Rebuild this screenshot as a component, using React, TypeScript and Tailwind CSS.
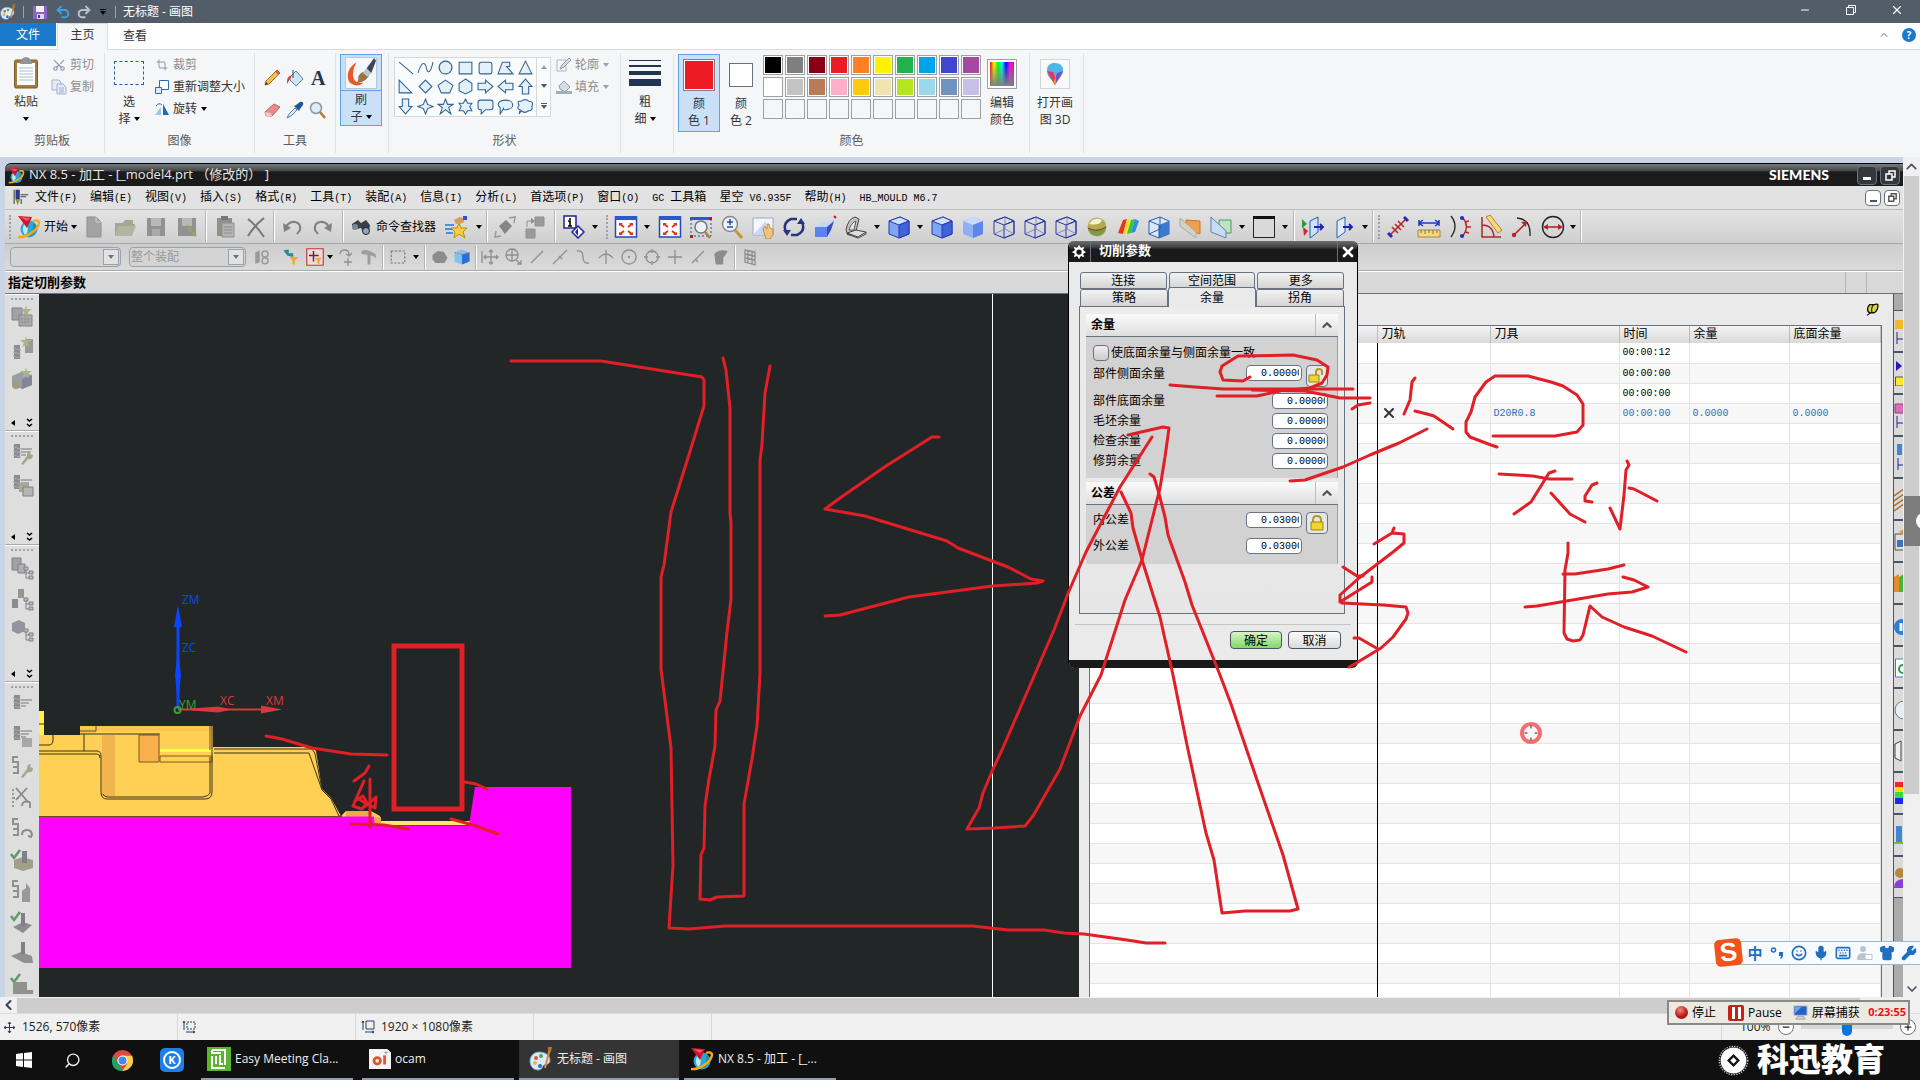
import { Fragment, useState } from "react";
import type { ReactNode } from "react";
import { ChevronUp, ChevronDown, ChevronLeft, Scissors, Crop, Search, Undo2, Redo2, Smile, Mic, Keyboard, Shirt, Wrench, X, Minus, Plus } from "lucide-react";

const UI = "font-['Open_Sans','Noto_Sans_CJK_SC',sans-serif]";
const NX = "font-['Liberation_Sans','Noto_Sans_CJK_SC',sans-serif]";
const MONO = "font-['Liberation_Mono','Noto_Sans_CJK_SC',monospace]";

/* ---------- small helpers ---------- */

// latin runs are half the width of a CJK glyph in the NX menus
function Sim({ children }: { children: string }) {
  const parts = children.split(/([\u4e00-\u9fff]+)/).filter(Boolean);
  return (
    <span className="whitespace-pre">
      {parts.map((p, i) => (/[\u4e00-\u9fff]/.test(p) ? <Fragment key={i}>{p}</Fragment> : <span key={i} className={`${MONO} text-[10px]`}>{p}</span>))}
    </span>
  );
}

function Ico({ children, className = "size-6", box = "0 0 24 24" }: { children: ReactNode; className?: string; box?: string }) {
  return <svg viewBox={box} className={`shrink-0 ${className}`} fill="none">{children}</svg>;
}

function Caret({ className = "text-black" }: { className?: string }) {
  return <svg viewBox="0 0 6 4" className={`w-[6px] h-[4px] shrink-0 ${className}`}><path d="M0 0h6L3 4z" fill="currentColor" /></svg>;
}

function NxLogo({ className = "size-6" }: { className?: string }) {
  return (
    <Ico className={className}>
      <circle cx="12" cy="14" r="8.500" fill="#2aa5dd" />
      <path d="M8 20c-3-4-3-9 1-13 2 5 3 10-1 13z" fill="#bfeaf8" />
      <path d="M12 22c3-3 5-8 4-14 4 2 6 9-4 14z" fill="#1f7d3c" opacity=".6" />
      <path d="M1 22c7 1 20-6 21-14 0-3-4-3-6-2" stroke="#f2a91c" strokeWidth="2.400" />
      <path d="M1 1l14 1-5 11z" fill="#d3142b" />
      <path d="M3 2l10 1-3 3z" fill="#f05a6a" />
    </Ico>
  );
}

function Palette({ className = "size-6" }: { className?: string }) {
  return (
    <Ico className={className}>
      <path d="M10 5c6 0 11 3 11 8s-4 4-6 5-1 5-6 5-8-4-8-9 4-9 9-9z" fill="#d9ecf7" stroke="#6ba3c7" />
      <circle cx="7" cy="11" r="2" fill="#e2533f" /><circle cx="12" cy="9" r="2" fill="#4aa94a" />
      <circle cx="6" cy="16" r="2" fill="#f0b429" /><circle cx="11" cy="19" r="2" fill="#3567c9" />
      <path d="M20 1l2 1-5 19-2 0z" fill="#e08a35" /><path d="M19 0h4l-1 5-3-1z" fill="#b3752f" />
    </Ico>
  );
}

/* ---------- Paint ---------- */

function TitleBar() {
  return (
    <header className="h-[23px] shrink-0 bg-[#535d6a] flex items-center text-white text-xs">
      <Palette className="size-4" />
      <span className="w-px h-3 bg-gray-400 ml-[7px]" />
      <Ico className="size-4 ml-2" box="0 0 16 16">
        <path d="M1 2h14v13H1z" fill="#8a63c4" /><path d="M4 2h8v6H4z" fill="#f4eefb" /><path d="M5 10h7v5H5z" fill="#dcd3ec" /><path d="M6 11h2v3H6z" fill="#57369b" />
      </Ico>
      <Undo2 className="size-4 ml-[7px] text-[#3ba0e6]" strokeWidth={3} />
      <Redo2 className="size-4 ml-[5px] text-[#b9c1ca]" strokeWidth={3} />
      <span className="ml-[8px] flex flex-col items-center gap-px"><i className="w-[6px] h-px bg-black" /><Caret /></span>
      <span className="w-px h-3 bg-gray-400 ml-[9px] mr-[7px]" />
      <h1>无标题 - 画图</h1>
      <div className="ml-auto flex items-center pb-1">
        <button aria-label="最小化" className="w-[46px] flex justify-center"><Minus className="size-3" strokeWidth={2} /></button>
        <button aria-label="还原" className="w-[46px] flex justify-center">
          <Ico className="size-[10px]" box="0 0 10 10"><path d="M.5 2.500h7v7h-7zM2.500 2.500v-2h7v7h-2" stroke="#fff" /></Ico>
        </button>
        <button aria-label="关闭" className="w-[46px] flex justify-center"><X className="size-[14px]" strokeWidth={2} /></button>
      </div>
    </header>
  );
}

function Tabs() {
  return (
    <nav className="h-[27px] shrink-0 bg-white border-b border-[#dadbdc] flex items-start text-xs text-[#333]">
      <button className="w-14 h-[23px] bg-[#1979ca] text-white">文件</button>
      <button className="w-[51px] h-[27px] ml-px bg-[#f5f6f7] border-x border-t border-[#dadbdc] pb-1">主页</button>
      <button className="w-[54px] h-[25px]">查看</button>
      <div className="ml-auto flex items-center gap-3 pt-[5px] pr-1">
        <ChevronUp className="size-3 text-gray-500" />
        <button aria-label="帮助" className="size-[14px] rounded-full bg-[#1979ca] text-white text-[10px] leading-[14px] font-bold">?</button>
      </div>
    </nav>
  );
}

function Group({ label, className, children }: { label?: string; className: string; children: ReactNode }) {
  return (
    <section className={`relative shrink-0 flex flex-col border-r border-[#dfe1e4] mt-[3px] mb-[4px] ${className}`}>
      <div className="flex-1 flex items-start">{children}</div>
      <div className="h-5 shrink-0 text-center leading-4 text-[#5c5c5c]">{label}</div>
    </section>
  );
}

const SHAPES = [
  "M2 3l13 11", "M1 13C5 0 8 4 9 9s4 4 6-6", "M8 2a6 6 0 1 0 .1 0z", "M2 3h12v11H2z", "M4 3h8q2 0 2 2v7q0 2-2 2H4q-2 0-2-2V5q0-2 2-2z", "M5 3h7v4H9l6 7H1z", "M8 2l6 12H2z",
  "M2 2l12 12H2z", "M8 2l6 6-6 6-6-6z", "M8 2l7 5-3 7H4L1 7z", "M8 1l6 4v7l-6 3-6-3V5z", "M1 5h7V2l7 6-7 6v-3H1z", "M15 5H8V2L1 8l7 6v-3h7z", "M5 15V8H2l6-7 6 7h-3v7z",
  "M5 1v7H2l6 7 6-7h-3V1z", "M8 1l2 5 5 2-5 2-2 5-2-5-5-2 5-2z", "M8 1l2 5h5l-4 3 2 6-5-4-5 4 2-6-4-3h5z", "M8 1l2 4h4l-2 3 2 4h-4l-2 3-2-3H2l2-4-2-3h4z", "M3 2h10q2 0 2 2v5q0 2-2 2H8l-4 4v-4H3q-2 0-2-2V4q0-2 2-2z", "M8 2c9 0 9 9 0 9-1 0-2 0-2-1l-3 5v-6C-1 6 2 2 8 2z", "M4 3q4-3 7 0q5 0 3 5q1 4-3 4q-4 3-7 0l-2 3 1-4q-4-1-1-4q-2-4 0-4z",
];

function ShapeGallery() {
  return (
    <div className="ml-[5px] mt-1 w-[157px] h-[60px] border border-[#d5d7da] bg-[#fafbfb] flex">
      <div className="grid grid-cols-7 w-[141px]">
        {SHAPES.map((d, i) => (
          <button key={i} aria-label={`形状 ${i + 1}`} className="flex items-center justify-center">
            <Ico className="size-[17px]" box="0 0 16 16"><path d={d} stroke="#2f6497" fill={i < 2 ? "none" : "#e3f1fb"} /></Ico>
          </button>
        ))}
      </div>
      <div className="flex-1 border-l border-[#d5d7da] flex flex-col items-center justify-around">
        <Caret className="rotate-180 text-gray-400" /><Caret className="text-gray-600" />
        <span className="flex flex-col items-center gap-px"><i className="w-[6px] h-px bg-gray-600" /><Caret className="text-gray-600" /></span>
      </div>
    </div>
  );
}

const ROW1 = ["bg-black", "bg-[#7f7f7f]", "bg-[#880015]", "bg-[#ed1c24]", "bg-[#ff7f27]", "bg-[#fff200]", "bg-[#22b14c]", "bg-[#00a2e8]", "bg-[#3f48cc]", "bg-[#a349a4]"];
const ROW2 = ["bg-white", "bg-[#c3c3c3]", "bg-[#b97a57]", "bg-[#ffaec9]", "bg-[#ffc90e]", "bg-[#efe4b0]", "bg-[#b5e61d]", "bg-[#99d9ea]", "bg-[#7092be]", "bg-[#c8bfe7]"];

function Swatches() {
  return (
    <div className="ml-px mt-[2px] shrink-0 grid grid-cols-10 gap-[2px]">
      {[...ROW1, ...ROW2].map((c) => (
        <button key={c} aria-label="颜色" className="size-5 border border-[#a0a0a0] bg-white p-px"><span className={`block size-full ${c}`} /></button>
      ))}
      {ROW1.map((c) => <span key={c} className="size-5 border border-[#a0a0a0]" />)}
    </div>
  );
}

function Stack({ icon, a, b, caret, className }: { icon: ReactNode; a: string; b?: string; caret?: boolean; className: string }) {
  return (
    <button className={`shrink-0 flex flex-col items-center text-xs leading-[17px] ${className}`}>
      <span className="h-10 flex items-center justify-center shrink-0">{icon}</span>
      <span>{a}</span>
      <span className="flex items-center gap-[3px] h-[17px]">{b}{caret && <Caret />}</span>
    </button>
  );
}

function Small({ icon, text, caret, off }: { icon: ReactNode; text: string; caret?: boolean; off?: boolean }) {
  return (
    <button className={`h-[22px] flex items-center gap-1 whitespace-nowrap ${off ? "text-[#8d8d8d]" : ""}`}>
      <span className="w-[14px] flex justify-center">{icon}</span>{text}{caret && <Caret className={off ? "text-gray-400" : "text-black"} />}
    </button>
  );
}

function Ribbon() {
  return (
    <div className="h-[107px] shrink-0 bg-[#f5f6f7] flex text-xs text-[#333]">
      <Group label="剪贴板" className="w-[105px]">
        <Stack className="w-[52px]" a="粘贴" caret icon={
          <Ico className="w-6 h-8" box="0 0 24 32">
            <rect x=".5" y="3" width="23" height="28" rx="1.500" fill="#a67c3e" stroke="#7d5b28" /><path d="M3 6h18v22H3z" fill="#fff" />
            <path d="M5 11h14M5 14h14M5 17h14M5 20h14M5 23h14" stroke="#a9bdd6" /><path d="M7 3q2-3 5-3t5 3l1 4H6z" fill="#8d949b" />
          </Ico>} />
        <div className="pt-[1px]">
          <Small off text="剪切" icon={<Scissors className="size-[14px] -rotate-90 text-[#8a98b0]" />} />
          <Small off text="复制" icon={<Ico className="size-4" box="0 0 16 16"><path d="M1 1h7l2 2v8H1z" fill="#e6ecf5" stroke="#9fb0c9" /><path d="M6 5h6l3 3v7H6z" fill="#e6ecf5" stroke="#9fb0c9" /><path d="M8 9h5M8 11h5M8 13h5" stroke="#9fb0c9" /></Ico>} />
        </div>
      </Group>
      <Group label="图像" className="w-[150px]">
        <Stack className="w-12" a="选" b="择" caret icon={<span className="w-[30px] h-6 border border-dashed border-[#2b5f9e]" />} />
        <div className="pt-[1px] ml-[2px]">
          <Small off text="裁剪" icon={<Crop className="size-3 text-[#8a98b0]" />} />
          <Small text="重新调整大小" icon={<Ico className="size-[14px]" box="0 0 14 14"><path d="M4.500 .5h9v9h-9z" stroke="#2b6cb0" fill="#fff" /><path d="M.5 7.500h6v6h-6z" stroke="#2b6cb0" fill="#d9ecfb" /></Ico>} />
          <Small text="旋转" caret icon={<Ico className="size-[14px]" box="0 0 14 14"><path d="M0 13h6V5z" fill="#9fc4e6" /><path d="M8 13h6L8 2z" fill="#1f6bb5" /><path d="M1 4q3-4 6-1" stroke="#1f6bb5" /></Ico>} />
        </div>
      </Group>
      <Group label="工具" className="w-[81px]">
        <div className="grid grid-cols-3 w-[70px] ml-[5px] mt-2 h-16 place-items-center">
          <Ico className="size-[18px]" box="0 0 18 18"><path d="M2 16l1-4L14 1l3 3L6 15z" fill="#f4c04b" stroke="#a36a2b" /><path d="M2 16l1-3 2 2z" fill="#333" /><path d="M13 2l3 3" stroke="#c55" strokeWidth="2" /></Ico>
          <Ico className="size-[18px]" box="0 0 18 18"><path d="M4 8l6-6 7 8-7 7-6-6z" fill="#cfe3f3" stroke="#4c81ae" /><path d="M7 1v8" stroke="#345" /><path d="M6 6q-6 1-5 9l3-5z" fill="#d8432c" /></Ico>
          <span className="font-['Liberation_Serif',serif] font-bold text-[20px] leading-5 text-[#1f3552]">A</span>
          <Ico className="size-[18px]" box="0 0 18 18"><path d="M2 11l9-8 6 3-8 9-6 0z" fill="#ea8b8b" stroke="#c06060" /><path d="M2 11l6 1 1 3-6 1z" fill="#f6c3c3" /></Ico>
          <Ico className="size-[18px]" box="0 0 18 18"><path d="M1 17l2-4 6-6 2 2-6 6z" fill="#dcebf6" stroke="#5681a8" /><path d="M8 5l5 5 1-2 3-4q1-4-3-3l-4 3z" fill="#20568f" /></Ico>
          <Ico className="size-[18px]" box="0 0 18 18"><circle cx="7" cy="7" r="5.500" fill="#dcecf8" stroke="#8798a8" strokeWidth="1.500" /><path d="M11 11l5 6" stroke="#b0793a" strokeWidth="2.500" /></Ico>
        </div>
      </Group>
      <Group className="w-[53px]">
        <button className="ml-1 mt-[1px] w-[42px] h-[72px] border border-[#62a2e4] bg-[#c9e0f7] flex flex-col items-center leading-[17px]">
          <span className="h-9 w-full border-b border-[#62a2e4] flex items-center justify-center">
            <Ico className="size-8 bg-[#f4f7fa] border border-[#b9c6d3]" box="0 0 32 32">
              <path d="M11 5C2 9-1 22 5 27q7 5 14-1-9 2-11-5Q6 13 11 5z" fill="#e8582a" /><path d="M13 20q4-8 12-4-1 9-14 11 3-3 2-7z" fill="#9a7440" /><path d="M18 16l4-5 5 5-4 4z" fill="#b9c4cf" /><path d="M22 11L30 0l2 3-5 13z" fill="#3a4756" />
            </Ico>
          </span>
          <span>刷</span>
          <span className="flex items-center gap-[3px]">子<Caret /></span>
        </button>
      </Group>
      <Group label="形状" className="w-[232px]">
        <ShapeGallery />
        <div className="pt-[1px] ml-[6px]">
          <Small off text="轮廓" caret icon={<Ico className="size-4" box="0 0 16 16"><path d="M1 3h9v11H1z" stroke="#a9b4c2" /><path d="M4 12l2-4 7-7 2 2-7 7z" fill="#d8dde3" stroke="#8f9cab" /></Ico>} />
          <Small off text="填充" caret icon={<Ico className="size-4" box="0 0 16 16"><path d="M0 12h16v3H0z" fill="#a3afbf" /><path d="M3 7l5-5 6 6-5 5-5-3z" fill="#d5dce5" stroke="#8f9cab" /></Ico>} />
        </div>
      </Group>
      <Group className="w-[53px]">
        <Stack className="w-12" a="粗" b="细" caret icon={
          <span className="w-8 flex flex-col gap-1 *:bg-[#1f3552]"><i className="h-px" /><i className="h-[2px]" /><i className="h-1" /><i className="h-[7px]" /></span>} />
      </Group>
      <Group label="颜色" className="w-[356px]">
        <Stack className="w-[42px] h-[78px] ml-1 mt-px border border-[#62a2e4] bg-[#c9e0f7]" a="颜" b="色 1" icon={<span className="size-8 border border-[#8c7b7b] bg-white p-px"><i className="block size-full bg-[#ed1c24]" /></span>} />
        <Stack className="w-[42px] mt-[2px]" a="颜" b="色 2" icon={<span className="size-6 border border-gray-500 bg-white" />} />
        <Swatches />
        <Stack className="w-[42px] mt-px" a="编辑" b="颜色" icon={
          <span className="size-[30px] border border-gray-400 bg-white p-[2px]"><i className="block size-full bg-[linear-gradient(to_top,#808080,transparent),linear-gradient(to_right,#f00,#ff0,#0f0,#0ff,#00f,#f0f,#f06)]" /></span>} />
      </Group>
      <Group className="w-[54px]">
        <Stack className="w-[50px] mt-px" a="打开画" b="图 3D" icon={
          <span className="size-[30px] border border-gray-300 bg-[#fafafa] flex items-center justify-center">
            <Ico className="size-6">
              <path d="M12 1c6 0 9 4 8 9s-6 7-8 13C10 17 4 16 4 9s4-8 8-8z" fill="#4cb6ea" /><path d="M4 9q3 6 8 14 1-9-2-13z" fill="#e8365e" /><path d="M20 9q-3 7-8 14 0-7 2-12z" fill="#7b4fc9" /><path d="M12 23q-2-4 0-7 2 3 0 7z" fill="#f39a2b" />
            </Ico>
          </span>} />
      </Group>
    </div>
  );
}

/* ---------- NX icons ---------- */

const G = "#8f8f8f";

function Cube({ kind = "solid" }: { kind?: "solid" | "wire" | "soft" }) {
  if (kind === "soft") return <Ico><path d="M2 6l11-4 9 4v13l-10 4-10-4z" fill="#8fb0f5" /><path d="M2 6l10 4 10-4-9-4z" fill="#c9d9fb" /><path d="M12 10v13l10-4V6z" fill="#5f86e8" /></Ico>;
  const wire = kind === "wire";
  return (
    <Ico>
      <path d="M2 6l11-4 9 4v13l-10 4-10-4z" fill={wire ? "none" : "#7ea4f4"} stroke="#2b3aa8" />
      <path d="M2 6l10 4 10-4-9-4z" fill={wire ? "none" : "#cfe0fd"} stroke="#2b3aa8" />
      <path d="M12 10v13l10-4V6z" fill={wire ? "none" : "#3e64dc"} stroke="#2b3aa8" />
      {wire && <path d="M13 2v12L2 19M13 14l9 5" stroke="#6a74c8" strokeWidth=".8" />}
    </Ico>
  );
}

const FIT = (
  <Ico>
    <path d="M1.500 2h21v20h-21z" fill="#fff" stroke="#2448b5" strokeWidth="1.500" /><path d="M1 1h22v4H1z" fill="#2f57c9" />
    <path d="M6 9l4 3M18 9l-4 3M6 19l4-3M18 19l-4-3" stroke="#d8331f" strokeWidth="2" /><path d="M5 8h4l-4 3zM19 8h-4l4 3zM5 20h4l-4-3zM19 20h-4l4-3z" fill="#d8331f" />
  </Ico>
);

type Item = [kind: "icon" | "caret" | "sep" | "grip" | "text", width: string, content?: ReactNode];

const TOOLBAR: Item[] = [
  ["grip", "w-[10px]"], ["icon", "w-[27px]", <NxLogo />], ["text", "w-[28px]", "开始"], ["caret", "w-2"],
  ["icon", "w-8", <Ico><path d="M5 2h9l5 5v15H5z" fill="#a3a3a3" stroke={G} /><path d="M14 2v5h5" stroke="#ccc" /></Ico>],
  ["icon", "w-[30px]", <Ico><path d="M2 8h8l2-3h8v4l2 0-3 12H2z" fill="#a5a593" /><path d="M5 11h18l-4 10H2z" fill="#b4b4a2" /></Ico>],
  ["icon", "w-8", <Ico><path d="M3 3h18v18H3z" fill="#929292" /><path d="M7 3h10v8H7z" fill="#b9b9b9" /><path d="M8 14h8v7H8z" fill="#aaa" /></Ico>],
  ["icon", "w-[30px]", <Ico><path d="M3 3h18v18H3z" fill="#929292" /><path d="M7 3h10v8H7z" fill="#b9b9b9" /><path d="M10 11l3-1 9 10-2 2z" fill="#a39a6a" /></Ico>],
  ["sep", "w-2"],
  ["icon", "w-[30px]", <Ico><path d="M4 3h15v18H4z" fill="#909087" /><path d="M8 1h7v4H8z" fill="#777" /><path d="M9 8h12v14H9z" fill="#b3b3b3" stroke={G} /><path d="M11 12h8M11 15h8M11 18h8" stroke={G} /></Ico>],
  ["icon", "w-[31px]", <Ico><path d="M4 4q8 6 16 18M20 3Q10 11 4 21" stroke="#777" strokeWidth="2" /></Ico>],
  ["sep", "w-[6px]"],
  ["icon", "w-[30px]", <Ico><path d="M5 13Q9 6 15 7t5 8l-3 4" stroke="#808080" strokeWidth="2" /><path d="M3 8l1 9 7-4z" fill="#808080" /></Ico>],
  ["icon", "w-8", <Ico><path d="M19 13Q15 6 9 7t-5 8l3 4" stroke="#808080" strokeWidth="2" /><path d="M21 8l-1 9-7-4z" fill="#808080" /></Ico>],
  ["sep", "w-2"],
  ["icon", "w-7", <Ico><path d="M3 9l6-4 3 3 5-3 4 5-1 7q-3 4-6 0l-2-4-4 1q-4 2-5-2z" fill="#3b3f47" /><circle cx="6" cy="12" r="3" fill="#7d8a9c" /><circle cx="17" cy="16" r="3.500" fill="#92a5c4" stroke="#222" /></Ico>],
  ["text", "w-[62px]", "命令查找器"],
  ["icon", "w-[38px]", <Ico><path d="M1 10h9M1 14h8M2 18h7" stroke="#4a90d8" strokeWidth="2" /><path d="M15 8l2 5 6 0-4 4 2 6-6-4-5 4 1-6-4-4h6z" fill="#f9cf3c" stroke="#b98a18" /><path d="M10 5l6-3 5 2-2 4-7 1z" fill="#d99b5c" /><path d="M19 1h4v4h-4z" fill="#2b56c5" /></Ico>],
  ["caret", "w-2"], ["sep", "w-2"],
  ["icon", "w-7", <Ico><path d="M6 11l7-6 6 6-7 8z" fill="#858585" /><path d="M16 3l6-1-1 6M8 21l-6 1 1-6" stroke="#999" strokeWidth="1.500" /></Ico>],
  ["icon", "w-[31px]", <Ico><path d="M12 2h9v9h-9zM3 14h9v9H3z" fill="#9a9a9a" stroke={G} /><path d="M4 12V6h5" stroke={G} /><path d="M8 3l4 3-4 3z" fill={G} /></Ico>],
  ["sep", "w-[10px]"],
  ["icon", "w-7", <Ico><path d="M2 1h12v12H2z" fill="#fff" stroke="#23239a" strokeWidth="1.500" /><path d="M8 3v2M6 6h2v5M6 11h4" stroke="#000" strokeWidth="1.600" /><path d="M16 11l6 6-6 6-6-6z" fill="#fff" stroke="#23239a" strokeWidth="1.500" /><path d="M16 13l-3 4 3 4z" fill="#23239a" /></Ico>],
  ["caret", "w-[14px]"], ["grip", "w-[10px]"], ["icon", "w-7", FIT], ["caret", "w-[14px]"], ["icon", "w-[31px]", FIT],
  ["icon", "w-[31px]", <Ico><path d="M2 4h20v17H2z" stroke="#2448b5" strokeDasharray="2 2" /><path d="M1 2h20v3H1z" fill="#2f57c9" /><circle cx="12" cy="12" r="6" fill="#eaf2f5" stroke="#777" strokeWidth="1.500" /><path d="M16 17l5 6" stroke="#b4823a" strokeWidth="2.500" /><path d="M20 2h3v3h-3zM1 20h3v3H1z" fill="#c11" /></Ico>],
  ["icon", "w-[31px]", <Ico><circle cx="10" cy="9" r="7.500" fill="#eef3f6" stroke="#888" strokeWidth="1.500" /><path d="M10 4v6M7 7h6M7 12h6" stroke="#2448b5" strokeWidth="1.500" /><path d="M15 15l7 8" stroke="#c7943f" strokeWidth="3" /></Ico>],
  ["icon", "w-[31px]", <Ico><path d="M2 3h20v17H2z" fill="#f4f6fb" stroke="#9aa9c6" /><path d="M2 20L15 6v14z" fill="#c8d6ee" /><path d="M12 14l2-3 2 3V9l2 0 1 4 3 1v6l-3 4h-4z" fill="#f2c283" stroke="#a8762f" strokeWidth=".7" /></Ico>],
  ["icon", "w-[31px]", <Ico><path d="M4 17Q0 8 9 4l6 0M20 7q4 9-5 13H9" stroke="#27357f" strokeWidth="2.500" /><path d="M1 15h8l-4 6zM23 9h-8l4-6z" fill="#27357f" /></Ico>],
  ["icon", "w-[31px]", <Ico><path d="M2 13l11-3 9-6-8 9z" fill="#a9c4fa" /><path d="M2 12h12v10H2z" fill="#5c83ea" /><path d="M2 12l6-4 13-2-7 6z" fill="#c3d6fc" /><path d="M14 12l7-6-3 9-4 7z" fill="#3350bd" /><path d="M21 1l2 2" stroke="#c11" strokeWidth="2" /></Ico>],
  ["icon", "w-[31px]", <Ico><path d="M2 15Q4 4 11 2l4 2-3 12-8 4z" fill="#c4c4c4" stroke="#444" /><path d="M5 15q2-7 7-9l-2 9z" fill="#e6e6e6" stroke="#555" /><path d="M3 18l9-3 10 2-8 5z" fill="#ddd" stroke="#444" /><path d="M3 18v1l11 4 8-4v-2" stroke="#444" /></Ico>],
  ["caret", "w-3"], ["icon", "w-[31px]", <Cube />], ["caret", "w-3"],
  ["icon", "w-[31px]", <Cube />], ["icon", "w-[31px]", <Cube kind="soft" />], ["icon", "w-[31px]", <Cube kind="wire" />], ["icon", "w-[31px]", <Cube kind="wire" />], ["icon", "w-[31px]", <Cube kind="wire" />],
  ["icon", "w-[31px]", <Ico><circle cx="12" cy="12" r="9.500" fill="#b8a94c" /><path d="M4 9q5-8 13-4-2 6-13 4z" fill="#f0f2d4" /><path d="M3 13q9 5 18-1-1 8-9 9-8-1-9-8z" fill="#7c9a4a" /><path d="M3 13q9 5 18-1" stroke="#6b3f2a" /></Ico>],
  ["icon", "w-[31px]", <Ico><path d="M2 18L7 5l4-1-4 15z" fill="#e8331f" /><path d="M7 19l4-15 4 1-4 14z" fill="#f7dc2d" /><path d="M11 19l4-14 4-1-4 14z" fill="#3cc43f" /><path d="M15 18l4-14 4 2-4 11z" fill="#2e8de8" /></Ico>],
  ["icon", "w-[31px]", <Ico><path d="M2 6l11-4 9 4v13l-10 4-10-4z" fill="#dbe8fb" stroke="#2b5fa8" /><path d="M12 10v13l10-4V6z" fill="#3a78d0" /><path d="M2 6l10 4v13M13 2v12l-11 5" stroke="#2b5fa8" /></Ico>],
  ["icon", "w-[31px]", <Ico><path d="M8 5l14 1v13l-8-3-6-5z" fill="#f0a04b" stroke="#c5762a" /><path d="M2 3l16 14v6L2 11z" fill="#d9d0c4" stroke="#aaa" /></Ico>],
  ["icon", "w-[31px]", <Ico><path d="M10 5h12v13h-5l-7-6z" fill="#bfe3c2" stroke="#4c9a5a" /><path d="M2 2l15 14v7L2 17z" fill="#c5dcf4" stroke="#5a83b0" /></Ico>],
  ["caret", "w-3"], ["icon", "w-[31px]", <Ico><path d="M1.500 2.500h21v20h-21z" fill="#d9d9d9" stroke="#222" /><path d="M1 1h22v3H1z" fill="#111" /></Ico>], ["caret", "w-3"], ["sep", "w-[6px]"],
  ["icon", "w-[31px]", <Ico><path d="M1 4l5 5-5 4z" fill="#2a9a3a" /><path d="M2 12l5 4-4 5z" fill="#d22" /><path d="M9 6l8-4v15l-8 6z" fill="#cfe0f8" stroke="#2b5fa8" /><path d="M13 12h9M19 9l3 3-3 3" stroke="#1a22b5" strokeWidth="1.800" /></Ico>],
  ["icon", "w-[31px]", <Ico><path d="M5 6l8-4v15l-8 6z" fill="#dfeafb" stroke="#2b5fa8" /><path d="M11 12h9M17 9l3 3-3 3" stroke="#1a22b5" strokeWidth="1.800" /></Ico>],
  ["caret", "w-[11px]"], ["sep", "w-[6px]"], ["grip", "w-[6px]"],
  ["icon", "w-[31px]", <Ico><path d="M4 20L20 4M6 12l6 6M9 9l6 6M12 6l6 6" stroke="#b3262b" strokeWidth="1.600" /><path d="M2 18l4 4M18 2l4 4" stroke="#2a2ab8" strokeWidth="3" /></Ico>],
  ["icon", "w-[31px]", <Ico><path d="M2 5v6M22 5v6M3 8h18M6 5L2 8l4 3M18 5l4 3-4 3" stroke="#2040b5" strokeWidth="1.500" /><path d="M1 15h22v7H1z" fill="#f5d77c" stroke="#a8863a" /><path d="M4 15v3M8 15v4M12 15v3M16 15v4M20 15v3" stroke="#775" /></Ico>],
  ["icon", "w-[31px]", <Ico><path d="M3 1q8 10 0 21" stroke="#222" strokeWidth="1.300" /><path d="M15 3q7 8 0 18M17 7l4-1M18 12h5M17 17l4 1" stroke="#b3262b" strokeWidth="1.500" /><circle cx="14" cy="3" r="2" fill="#2a2ab8" /><circle cx="14" cy="21" r="2" fill="#2a2ab8" /></Ico>],
  ["icon", "w-[31px]", <Ico><path d="M3 2v20h19M3 10q11 0 12 12" stroke="#b3262b" strokeWidth="1.500" /><path d="M7 2l4-2 12 15-4 3z" fill="#f5d77c" stroke="#a8863a" /></Ico>],
  ["icon", "w-[31px]", <Ico><path d="M7 3q14 1 13 18" stroke="#222" strokeWidth="1.300" /><path d="M4 20L16 8" stroke="#b3262b" strokeWidth="1.600" /><path d="M11 7l6-1-1 6z" fill="#b3262b" /><circle cx="4" cy="20" r="2.200" fill="#b3262b" /></Ico>],
  ["icon", "w-[31px]", <Ico><circle cx="12" cy="12" r="10.500" stroke="#222" strokeWidth="1.400" /><path d="M3 12h18" stroke="#b3262b" strokeWidth="1.600" /><path d="M2 12l5-3v6zM22 12l-5-3v6z" fill="#b3262b" /></Ico>],
  ["caret", "w-[10px]"], ["sep", "w-[6px]"],
];

function g(d: string) {
  return <Ico className="size-5" box="0 0 20 20"><path d={d} stroke={G} strokeWidth="1.300" /></Ico>;
}

const SELECTION: Item[] = [
  ["icon", "w-8", <Ico className="size-[18px]"><path d="M3 6l6-3v16l-6 2z" fill="#999" /><circle cx="16" cy="8" r="4" stroke="#999" strokeWidth="2" /><circle cx="16" cy="17" r="4" stroke="#999" strokeWidth="2" /></Ico>],
  ["icon", "w-[26px]", <Ico className="size-[18px]"><path d="M2 3l7-1v5l6 0v5l-8-2z" fill="#2a8a92" /><path d="M10 12h12l-5 5v6l-3-2v-4z" fill="#f5a62b" /></Ico>],
  ["icon", "w-[22px]", <Ico className="size-[18px]"><path d="M1 1h22v22H1z" fill="#eadcdc" stroke="#c33" strokeWidth="1.500" /><path d="M10 4v14M4 10h13" stroke="#723" strokeWidth="2" /><path d="M12 13h9l-3 4v5l-3-2v-3z" fill="#f5a62b" /></Ico>],
  ["caret", "w-2"],
  ["icon", "w-6", g("M4 7q0-4 5-4 4 0 4 5M10 7l3 2 3-3M12 11v8M8 15h8")],
  ["icon", "w-[22px]", <Ico className="size-[18px]"><path d="M2 4q5-3 11 0l8 4v6l-3-3-4-1v12l-4 0V9L2 8z" fill="#9d9d9d" /></Ico>],
  ["sep", "w-[6px]"],
  ["icon", "w-6", <Ico className="size-[18px]"><path d="M3 4h18v16H3z" stroke="#777" strokeWidth="1.500" strokeDasharray="3 2" /></Ico>],
  ["caret", "w-3"], ["sep", "w-[6px]"],
  ["icon", "w-[23px]", <Ico className="size-[18px]"><path d="M2 9l7-5 8 1 5 8-4 7H6l-4-5z" fill="#8c8c8c" /></Ico>],
  ["icon", "w-[22px]", <Ico className="size-[18px]"><path d="M2 6l10-4 10 4v12l-10 4-10-4z" fill="#7fc3ee" /><path d="M12 9v13l10-4V6z" fill="#2d6fd0" /><path d="M2 6l10 3 10-3" stroke="#c33" strokeDasharray="2 2" /></Ico>],
  ["sep", "w-[6px]"],
  ["icon", "w-[23px]", g("M10 3v14M3 10h14M8 5l2-2 2 2M8 15l2 2 2-2M5 8l-2 2 2 2M15 8l2 2-2 2M1 4v12")],
  ["icon", "w-[23px]", g("M8 2v12M2 8h12M8 2a6 6 0 1 0 .1 0M12 13l5 4M17 13v4h-4")],
  ["icon", "w-[23px]", g("M4 16L16 4")], ["icon", "w-[23px]", g("M3 17L17 3M9 9l3 3")], ["icon", "w-[23px]", g("M4 4q6-1 6 6t6 6")],
  ["icon", "w-[23px]", g("M10 3v14M3 11q7-8 14 0")], ["icon", "w-[23px]", g("M10 3a7 7 0 1 0 .1 0zM10 9v2M9 10h2")], ["icon", "w-[23px]", g("M10 4a6 6 0 1 0 .1 0zM10 2v4M10 14v4M2 10h4M14 10h4")],
  ["icon", "w-[23px]", g("M10 3v14M3 10h14")], ["icon", "w-[23px]", g("M4 16L16 4M7 12l3 3")],
  ["icon", "w-[23px]", <Ico className="size-[18px]"><path d="M3 8q6-7 18-4-3 6-6 9v9H5z" fill="#8c8c8c" /></Ico>],
  ["sep", "w-[6px]"],
  ["icon", "w-[23px]", g("M5 3l10 2v13L5 15zM5 7l10 2M5 11l10 2M8 4v12M12 4v13")],
];

function Bar({ items }: { items: Item[] }) {
  return (
    <>
      {items.map(([kind, width, content], i) => {
        if (kind === "sep") return <span key={i} className={`self-stretch my-px flex justify-center shrink-0 ${width}`}><i className="w-px bg-[#b4b4b4]" /><i className="w-px bg-white" /></span>;
        if (kind === "grip") return <span key={i} className={`shrink-0 flex justify-center ${width}`}><i className="h-6 border-l-2 border-dotted border-gray-400" /></span>;
        if (kind === "caret") return <span key={i} className={`shrink-0 flex justify-center ${width}`}><Caret /></span>;
        if (kind === "text") return <span key={i} className={`shrink-0 text-center whitespace-nowrap ${width}`}>{content}</span>;
        return <button key={i} aria-label="工具" className={`shrink-0 flex justify-center ${width}`}>{content}</button>;
      })}
    </>
  );
}

/* ---------- NX window ---------- */

const MENU = ["文件(F)", "编辑(E)", "视图(V)", "插入(S)", "格式(R)", "工具(T)", "装配(A)", "信息(I)", "分析(L)", "首选项(P)", "窗口(O)", "GC 工具箱", "星空 V6.935F", "帮助(H)", "HB_MOULD M6.7"];

function FilterSelect({ label, option, className }: { label: string; option?: string; className: string }) {
  return (
    <span className={`flex shrink-0 h-5 border border-gray-400 rounded-sm bg-[#d4d4d4] ${className}`}>
      <select aria-label={label} disabled className="flex-1 min-w-0 appearance-none pl-px text-[#9a9a9a] text-xs leading-[18px] opacity-100">{option && <option>{option}</option>}</select>
      <span className="w-4 m-px border border-gray-400 bg-[#e2e2e2] flex items-center justify-center"><Caret className="text-gray-500" /></span>
    </span>
  );
}

function NxHeader() {
  return (
    <>
      <div className="h-[23px] shrink-0 rounded-tl-md bg-[linear-gradient(#787c7e,#45484a_30%,#1b1b1b_36%,#1b1b1b)] border-t border-black flex items-center text-[#e8e8e8]">
        <NxLogo className="size-[17px] ml-[3px]" />
        <span className={`${UI} text-[13px] leading-5 ml-1 pb-[2px] whitespace-pre`}>NX 8.5 - 加工 - [_model4.prt （修改的） ]</span>
        <b className="ml-auto mr-7 text-[14px] leading-5 text-white font-['Lato',sans-serif] font-black">SIEMENS</b>
        <button aria-label="最小化" className="w-5 h-[19px] border border-gray-500 rounded-sm bg-[#35383a] flex items-end justify-center pb-1"><i className="w-2 h-[3px] bg-white" /></button>
        <button aria-label="还原" className="w-5 h-[19px] ml-[3px] mr-[3px] border border-gray-500 rounded-sm bg-[#35383a] flex items-center justify-center">
          <Ico className="size-[11px]" box="0 0 11 11"><path d="M1 4h6v6H1zM4 4V1h6v6H7" stroke="#fff" strokeWidth="1.500" /></Ico>
        </button>
      </div>
      <div className="h-6 shrink-0 bg-[#e2e2e2] border-b border-[#bcbcbc] flex items-center gap-[13px]">
        <Ico className="size-[17px] ml-[7px] -mr-[7px]"><path d="M5 1h6v14H5z" fill="#2c3a8c" /><path d="M5 15h6l-3 8z" fill="#9b9330" /><path d="M12 8h11M12 11h8M13 14v7M3 1v20" stroke="#444" strokeWidth="1.500" /></Ico>
        {MENU.map((m) => <button key={m} className="shrink-0"><Sim>{m}</Sim></button>)}
        <div className="ml-auto mr-[3px] flex gap-[3px]">
          <button aria-label="最小化子窗口" className="size-4 border border-gray-500 rounded-sm bg-white flex items-end justify-center pb-[3px]"><i className="w-[7px] h-[2px] bg-gray-600" /></button>
          <button aria-label="还原子窗口" className="size-4 border border-gray-500 rounded-sm bg-white flex items-center justify-center">
            <Ico className="size-[9px]" box="0 0 11 11"><path d="M1 4h6v6H1zM4 4V1h6v6H7" stroke="#555" strokeWidth="1.800" /></Ico>
          </button>
        </div>
      </div>
      <div className="h-[34px] shrink-0 bg-[linear-gradient(#e3e3e3,#cfcfcf)] border-b border-[#a9a9a9] flex items-center"><Bar items={TOOLBAR} /></div>
      <div className="h-[27px] shrink-0 bg-[linear-gradient(#cdcdcd,#dadada)] border-b border-[#a9a9a9] flex items-center">
        <FilterSelect label="类型过滤器" className="ml-[5px] w-[111px]" />
        <FilterSelect label="选择范围" option="整个装配" className="ml-2 w-[117px]" />
        <Bar items={SELECTION} />
      </div>
      <div className="h-[22px] shrink-0 bg-[#d8d8d8] border-t border-white flex items-center">
        <b className="ml-[3px] text-[13px]">指定切削参数</b>
        <i className="ml-auto mr-5 w-px h-full bg-[#b5b5b5]" /><i className="mr-9 w-px h-full bg-[#b5b5b5]" />
      </div>
    </>
  );
}

const MESH = <><path d="M2 3h10v12H2z" fill="#a2a2a6" stroke="#808084" /><path d="M9 10h13v11H9z" fill="#b0b0b4" stroke="#808084" /><path d="M12 11v9M15 11v9M18 11v9M10 14h11M10 17h11" stroke="#8a8a8e" strokeWidth=".7" /></>;
const DRILL = <><path d="M4 2h6v14H4z" fill="#8b8b92" /><path d="M3 5l8 2M3 9l8 2M3 13l8 2" stroke="#aaa" /></>;
const LINES = <path d="M11 7h11M11 10h8M11 13h5" stroke="#999" strokeWidth="1.500" />;
const STAR = <path d="M16 0l1 4 5 0-4 3 1 4-3-2-4 2 2-4-4-3h5z" fill="#aab48a" />;
const TREE = <><path d="M16 13v9h4M16 17h4" stroke="#808084" /><path d="M14 11h4v3h-4zM19 15h4v3h-4zM19 20h4v3h-4z" fill="#bbb" stroke="#808084" /></>;
const SPATH = <path d="M8 2H3v5h5v5H3M8 12v6H3" stroke="#909090" strokeWidth="2" />;
const WRENCH = <path d="M11 22l6-8q0-5 4-5l-1 3 3 1q0 5-5 4l-5 6z" fill="#a5a688" />;
const CHECK = <path d="M1 6l3 4 6-8" stroke="#5f9a6a" strokeWidth="2.500" />;
const BLOCK = <><path d="M2 9l9-4 11 3v10l-10 4-10-4z" fill="#9c9ca6" /><path d="M12 12l10-4v10l-10 4z" fill="#85859a" /><circle cx="6" cy="18" r="4" fill="#a39a82" /></>;

const RAILS: { cls: string; more: boolean; icons: ReactNode[] }[] = [
  { cls: "h-[137px]", more: true, icons: [<>{MESH}{STAR}</>, <><path d="M15 3h8v14h-8z" fill="#999" /><g transform="translate(0 7)">{DRILL}</g>{STAR}</>, <>{BLOCK}{STAR}</>] },
  { cls: "h-[114px]", more: true, icons: [<>{DRILL}{LINES}{WRENCH}</>, <>{DRILL}{LINES}<path d="M9 10h10v9H9z" fill="#a5ab90" /><path d="M13 14h10v9H13z" fill="#b5b5b5" stroke="#808084" /></>] },
  { cls: "h-[137px]", more: true, icons: [<><path d="M2 2h9v12H2z" fill="#a2a2a6" stroke="#808084" /><path d="M8 8h7v9H8z" fill="#b0b0b4" stroke="#808084" />{TREE}</>, <><path d="M8 2h6v9H8z" fill="#9b948c" /><path d="M2 12h6v9H2z" fill="#8b8b92" />{TREE}</>, <><path d="M2 5l7-3 6 3v8l-7 3-6-3z" fill="#9494a0" />{TREE}</>] },
  {
    cls: "flex-1", more: false, icons: [
      <>{DRILL}{LINES}</>, <>{DRILL}{LINES}<path d="M12 14h10v9H12z" fill="#a8a8ac" /></>, <>{SPATH}{WRENCH}</>,
      <><path d="M3 3v18M3 12h6" stroke="#999" strokeDasharray="2 2" strokeWidth="2" /><path d="M6 2l12 14M17 2L6 14M12 20q0-6 8-4M20 16v6" stroke="#888" strokeWidth="1.800" /></>,
      <>{SPATH}<path d="M12 18q0-5 5-5t5 6M22 20l-4-1" stroke="#888" strokeWidth="2" /></>,
      <>{CHECK}<path d="M4 12l9-3 10 3v8l-10 3-9-3z" fill="#a09f88" /><path d="M12 3h5v12h-5z" fill="#808088" /></>,
      <>{SPATH}<path d="M12 23V12l4-3V4l4 5v14z" fill="#989898" /></>,
      <>{CHECK}<path d="M3 17l10-5 9 3-9 8z" fill="#8c8c90" /><path d="M11 3h4v13h-4z" fill="#808088" /></>,
      <><path d="M1 15l10-4 11 4 1 7-9 0z" fill="#909090" /><path d="M11 1h4v12h-4z" fill="#808088" /></>,
      <>{CHECK}<path d="M3 10h14v8h6v4H3z" fill="#8f938f" /></>,
    ],
  },
];

function LeftRail() {
  return (
    <aside className="w-[34px] shrink-0 bg-[#dedede] flex flex-col">
      {RAILS.map((r, i) => (
        <div key={i} className={`${r.cls} shrink-0 flex flex-col items-center overflow-hidden border-t border-white ${r.more ? "border-b border-b-[#a9a9a9]" : ""}`}>
          <i className="w-[22px] border-t-2 border-dotted border-gray-400 mt-[3px] mb-[1px]" />
          {r.icons.map((ic, k) => <button key={k} aria-label="命令" className="h-[31px] shrink-0 flex items-center"><Ico>{ic}</Ico></button>)}
          {r.more && (
            <div className="mt-auto mb-[2px] w-full px-[6px] flex items-center justify-between">
              <svg viewBox="0 0 4 6" className="w-1 h-[6px]"><path d="M4 0v6L0 3z" /></svg>
              <Ico className="w-[7px] h-[10px]" box="0 0 7 10"><path d="M1 1l2.500 2L6 1M1 6l2.500 2L6 6" stroke="#000" strokeWidth="1.600" /></Ico>
            </div>
          )}
        </div>
      ))}
    </aside>
  );
}

function Viewport() {
  return (
    <div className="flex-1 min-w-0 bg-[#232627] overflow-hidden">
      <svg viewBox="39 294 1040 703" className="w-[1040px] h-[703px] max-w-none block" fill="none">
        <path d="M992.500 294v703" stroke="#fff" />
        {/* finished part */}
        <path d="M39 735h41v-9h133v21h99l4 4 6 38 9 9 10 18 5-5h25l9 5v6h91v4h-97l-2-9H39z" fill="#ffd054" />
        <path d="M39 711h5v24h-5z" fill="#fff04a" />
        <path d="M39 724h5" stroke="#333" />
        <path d="M80 726h133v5H96v3H80z" fill="#f0bd4c" opacity=".5" />
        <path d="M102 735h13v61h-13z" fill="#eda94a" opacity=".7" />
        <path d="M139 735h20v27h-20z" fill="#f7b04a" stroke="#7a5a20" />
        <path d="M160 749h53v3h-53z" fill="#ffff4a" />
        <path d="M160 756h52v6h-52z" stroke="#7a5a20" />
        <path d="M346 811h25v6h-25z" fill="#eda94a" />
        <path d="M380 821h90v4h-88z" fill="#ffe56a" />
        <path d="M39 751h58q4 0 4 5v36q0 7 6 7h98q7 0 7-7v-66M39 754h58q3 0 3 4M39 745h10q4 0 4-5v-5M80 734h80M84 734v17M214 753h95l13 37 9 9 8 17h3M214 749h97q4 1 5 10l6 30M103 794q1 3 5 3h95q6-1 7-4v-36" stroke="#3a3218" />
        <path d="M80 731h16v-5M210 726v24" stroke="#6b5322" />
        {/* blank */}
        <path d="M39 816.500h335l1 8.500h94l6-38h96v181H39z" fill="#f0f" />
        <path d="M375 817h6v8h-6z" fill="#eda94a" />
        <path d="M39 816.500h303M377 825.500h93" stroke="#6b4a20" />
        {/* axes */}
        <path d="M178 627v82" stroke="#0a46ff" strokeWidth="3" />
        <path d="M178 605l4 22h-8zM178 650l3 25-3 30-3-30z" fill="#0a46ff" />
        <path d="M178 709.500h85" stroke="#d8393f" strokeWidth="2" />
        <path d="M282 709.500l-21-4v8zM232 709.500l-14-3-26 2v2l26 2z" fill="#d8393f" />
        <circle cx="177.500" cy="710" r="3" stroke="#35a03c" strokeWidth="2" />
        <g className="font-['Open_Sans',sans-serif] text-[12px]">
          <text x="182" y="604" fill="#0a46ff">ZM</text><text x="182" y="652" fill="#0a46ff">ZC</text>
          <text x="220" y="705" fill="#d8393f">XC</text><text x="266" y="705" fill="#d8393f">XM</text><text x="179" y="709" fill="#35a03c">YM</text>
        </g>
      </svg>
    </div>
  );
}

const OPS = [
  { cut: false, tool: "", time: "00:00:12", side: "", floor: "" },
  { cut: false, tool: "", time: "00:00:00", side: "", floor: "" },
  { cut: false, tool: "", time: "00:00:00", side: "", floor: "" },
  { cut: true, tool: "D20R0.8", time: "00:00:00", side: "0.0000", floor: "0.0000" },
  ...Array.from({ length: 29 }, () => ({ cut: false, tool: "", time: "", side: "", floor: "" })),
];

function Navigator() {
  return (
    <div className="w-[814px] shrink-0 bg-[#eaeaea] flex flex-col overflow-hidden">
      <div className="h-[31px] shrink-0 flex items-center justify-end pr-[14px]">
        <Ico className="size-[13px]"><path d="M7 3h8q8-3 7 3-1 9-7 12H7q-5-2-4-8 1-5 4-7z" fill="#d8d83a" stroke="#111" strokeWidth="2.500" /><path d="M8 18l-6 5M14 3q-5 5-3 14" stroke="#111" strokeWidth="2" /></Ico>
      </div>
      <div className="flex-1 min-h-0 overflow-hidden ml-[10px] mr-[11px] border-l border-t border-r border-gray-500 bg-white">
        <table className="w-full table-fixed border-collapse text-xs">
          <colgroup><col className="w-[287px]" /><col className="w-[113px]" /><col className="w-[129px]" /><col className="w-[70px]" /><col className="w-[100px]" /><col /></colgroup>
          <thead>
            <tr className="h-[17px] bg-[linear-gradient(#f4f4f4,#d9d9d9)] text-left leading-[15px] *:font-normal *:border-r *:border-[#bdbdbd] *:px-1 *:pb-px">
              <th /><th>刀轨</th><th>刀具</th><th>时间</th><th>余量</th><th>底面余量</th>
            </tr>
          </thead>
          <tbody>
            {OPS.map((o, i) => (
              <tr key={i} className={`h-5 ${MONO} text-[10px] leading-[19px] border-b border-[#e4e4e4] odd:bg-white even:bg-[#f7f7f7] *:border-r *:border-[#e4e4e4] *:px-[3px] *:py-0 ${o.cut ? "text-[#2a6fc0]" : "text-black"}`}>
                <td className="border-r-black!" />
                <td>{o.cut && <X className="size-4 text-[#333]" strokeWidth={3} />}</td>
                <td>{o.tool}</td><td>{o.time}</td><td>{o.side}</td><td>{o.floor}</td>
              </tr>
            ))}
          </tbody>
        </table>
      </div>
    </div>
  );
}

const RESOURCES: ReactNode[] = [
  <><path d="M1 2h9v9H1z" fill="#f5b52e" /><path d="M3 14v12M3 21h6" stroke="#22229a" /></>,
  <><path d="M2 1l6 5-6 5z" fill="#2219b8" /><path d="M1.500 17h8v9h-8z" fill="#ffe92e" stroke="#555" /></>,
  <><path d="M1 2h9v9H1z" fill="#d86fb8" stroke="#90407c" /><path d="M3 14v12M3 21h6" stroke="#22229a" /></>,
  <><path d="M3 0h5v11H3z" fill="#3f86d6" /><path d="M4 14v12M4 21h6" stroke="#22229a" /></>,
  <path d="M0 10l10-7M0 15l10-7M0 20l10-7M0 25l10-7" stroke="#a86f2e" strokeWidth="1.500" />,
  <><path d="M1 6h9v16H1z" fill="#ddd" stroke="#555" /><path d="M5 4l5-3v5z" fill="#ee8d2a" /><path d="M3 12h7v7H3z" fill="#3d74b8" /></>,
  <><path d="M0 7l5-3v18H0z" fill="#e88a2a" /><path d="M5 7l5-3v18H5z" fill="#46b535" /></>,
  <><circle cx="8" cy="15" r="8" fill="#2f7fd8" /><path d="M7 11v8" stroke="#fff" strokeWidth="3" /></>,
  <><path d="M1.500 5h9v18h-9z" fill="#fff" stroke="#4a7ab5" /><circle cx="9" cy="15" r="4" stroke="#2f9a4a" strokeWidth="2" /></>,
  <circle cx="10" cy="14" r="9" fill="#e8eef4" stroke="#777" />,
  <path d="M1 6l6-3v20l-6-3z" fill="#eee" stroke="#444" />,
  <><path d="M1 2h9v6H1z" fill="#f22" /><path d="M1 7h9v6H1z" fill="#fd0" /><path d="M1 12h9v6H1z" fill="#3d3" /><path d="M1 18h9v6H1z" fill="#22f" /></>,
  <><path d="M2 4h6v16H2z" fill="#3f86d6" /><path d="M0 21h10" stroke="#7ab84a" strokeWidth="2" /></>,
  <><circle cx="6" cy="9" r="5" fill="#b58a3e" /><path d="M0 24q0-9 10-9v9z" fill="#8a3fd0" /></>,
];

function ResourceBar() {
  return (
    <aside className="w-[10px] shrink-0 bg-[#ababab] border-l border-gray-600 pt-4 overflow-hidden">
      {RESOURCES.map((r, i) => (
        <button key={i} aria-label="资源" className="h-[42px] w-full bg-[#dadada] border-t border-b border-gray-600 flex items-center"><Ico className="w-[10px] h-[26px]" box="0 0 10 26">{r}</Ico></button>
      ))}
    </aside>
  );
}

/* ---------- cutting parameters dialog ---------- */

function NumberBox({ id, value }: { id: string; value: string }) {
  const [v, setV] = useState(value);
  return <input id={id} value={v} onChange={(e) => setV(e.target.value)} className={`w-14 h-4 rounded-sm border border-gray-500 bg-white pl-[14px] pr-[2px] ${MONO} text-[10px] leading-[14px] outline-none`} />;
}

function Lock({ open }: { open?: boolean }) {
  return (
    <button aria-label="锁定" className="size-[22px] rounded-sm border border-gray-500 bg-[#e6e6e6] flex items-center justify-center">
      <Ico className="size-[18px]" box="0 0 18 18">
        <path d={open ? "M8 9V5q0-3 3-3t3 3v3" : "M5 9V6q0-4 4-4t4 4v3"} stroke="#b59a1e" strokeWidth="2" />
        <path d={open ? "M1 8h10v7H1z" : "M3 8h12v8H3z"} fill="#f0d52c" stroke="#a08518" />
      </Ico>
    </button>
  );
}

function Section({ title, children, className }: { title: string; children: ReactNode; className: string }) {
  return (
    <section>
      <h3 className="h-[23px] flex items-center bg-[linear-gradient(#fbfbfb,#dedede)] border-b border-gray-500 pl-[5px] font-bold">
        {title}
        <button aria-label={`折叠${title}`} className="ml-auto w-[23px] h-full border-l border-[#bdbdbd] flex items-center justify-center"><ChevronUp className="size-[14px] text-gray-600" strokeWidth={4} /></button>
      </h3>
      <div className={`bg-[#d2d2d2] border-r border-gray-400 ${className}`}>{children}</div>
    </section>
  );
}

const TAB = "flex-1 border border-gray-500 bg-[linear-gradient(#f2f2f2,#d5d5d5)] rounded-t-[3px]";

function Dialog() {
  return (
    <div role="dialog" aria-label="切削参数" className="absolute left-[1068px] top-[241px] w-[290px] rounded-md overflow-hidden bg-[#eaeaea] border-x border-black text-xs leading-4">
      <div className="h-[21px] bg-[linear-gradient(#6c6f71,#3c3e40_30%,#1a1a1a_40%,#1a1a1a)] flex items-center text-white">
        <Ico className="size-[14px] ml-[3px]"><circle cx="12" cy="12" r="6.500" stroke="#fff" strokeWidth="4" /><path d="M12 1v4M12 19v4M1 12h4M19 12h4M4 4l3 3M17 17l3 3M20 4l-3 3M4 20l3-3" stroke="#fff" strokeWidth="3" /></Ico>
        <i className="w-px h-full bg-gray-500 ml-[4px] mr-[8px]" />
        <b className="text-[13px] pb-1">切削参数</b>
        <button aria-label="关闭" className="ml-auto w-5 h-full border-l border-gray-500 flex items-center justify-center"><X className="size-4" strokeWidth={4} /></button>
      </div>
      <div className="pl-[10px] pr-3 pt-[10px]">
        <div role="tablist" className="flex gap-[2px] h-[17px] px-[1px]">
          <button role="tab" className={TAB}>连接</button><button role="tab" className={TAB}>空间范围</button><button role="tab" className={TAB}>更多</button>
        </div>
        <div role="tablist" className="flex items-end px-[1px] -mb-px">
          <button role="tab" className={`${TAB} h-[18px]`}>策略</button>
          <button role="tab" aria-selected="true" className="flex-1 h-5 -mt-[2px] border border-b-0 border-gray-500 rounded-t-[3px] bg-[#eaeaea]">余量</button>
          <button role="tab" className={`${TAB} h-[18px]`}>拐角</button>
        </div>
        <div className="border border-gray-500 px-[6px] pt-[7px] h-[308px] bg-[linear-gradient(#ececec,#e6e6e6)]">
          <Section title="余量" className="h-[141px] pl-[7px] pr-[9px] pt-2 mb-1">
            <label className="flex items-center gap-[2px] h-4 whitespace-nowrap"><input type="checkbox" className="appearance-none size-4 rounded-sm border border-gray-500 bg-[linear-gradient(#eee,#ccc)]" />使底面余量与侧面余量一致</label>
            <div className="flex items-start h-[26px] mt-1">
              <label htmlFor="side" className="flex-1 pt-[1px]">部件侧面余量</label><NumberBox id="side" value="0.00000" /><span className="ml-1"><Lock open /></span>
            </div>
            {[["floor", "部件底面余量"], ["blank", "毛坯余量"], ["check", "检查余量"], ["trim", "修剪余量"]].map(([id, text]) => (
              <div key={id} className="flex items-center justify-between h-5"><label htmlFor={id}>{text}</label><NumberBox id={id} value="0.00000" /></div>
            ))}
          </Section>
          <Section title="公差" className="h-[59px] pl-[7px] pr-[9px] pt-[7px]">
            <div className="flex items-start h-[26px]">
              <label htmlFor="intol" className="flex-1">内公差</label><NumberBox id="intol" value="0.03000" /><span className="ml-1"><Lock /></span>
            </div>
            <div className="flex items-start pr-[26px]"><label htmlFor="outtol" className="flex-1">外公差</label><NumberBox id="outtol" value="0.03000" /></div>
          </Section>
        </div>
      </div>
      <div className="mt-[10px] mx-[6px] border-t border-[#c4c4c4] flex justify-end gap-[6px] pt-[6px] pb-[11px] pr-[10px]">
        <button className="w-[52px] h-[18px] border border-gray-600 rounded-sm bg-[linear-gradient(#d8f5c8,#7fd867)] leading-[15px]">确定</button>
        <button className="w-[53px] h-[18px] border border-gray-600 rounded-sm bg-[linear-gradient(#fdfdfd,#dadada)] leading-[15px]">取消</button>
      </div>
      <div className="h-2 bg-[#1a1a1a]" />
    </div>
  );
}

/* ---------- hand drawn strokes on the canvas ---------- */

const STROKES = [
  "M511 361H601L658 370 702 377 704 380V406L687 461 671 512 664 565 661 577V669L671 748 673 865 669 928 689 929 725 926H972L1008 930 1044 930 1064 933 1084 934 1127 940 1146 943H1165",
  "M723 358L726 370 730 408V514L731 522V599L727 632 720 701 716 710 715 746 709 779 705 806 704 848 701 855 700 899 710 900 717 897 744 896V804L752 759 757 726 760 673V461L762 444 765 393 770 366",
  "M939 437H932L886 466 840 498 825 509 865 516 947 541 958 548 1008 567 1031 579 1043 581 1037 583 993 586 909 597 859 610 840 615 825 616",
  "M1152 437L1120 487 1086 552 1069 591 1054 630 1002 750 993 769 983 793 979 808 967 829 995 828 1025 826 1033 816 1060 769 1080 716 1101 675 1125 600 1142 560 1160 488 1165 457 1169 428 1163 427 1128 435",
  "M1121 492L1131 513 1133 528 1143 563 1160 617 1173 675 1187 745 1206 833 1214 860 1222 913 1245 911H1290L1298 909 1283 855 1257 780 1231 704 1220 675 1192 605 1185 582 1168 535 1165 517 1158 490 1154 477 1150 474",
  "M1250 377L1243 381 1223 380 1220 372 1222 366 1238 356 1293 355 1317 360 1328 367 1327 375 1322 383 1310 388 1290 390",
  "M1170 385L1195 387 1223 389H1353", "M1252 390L1305 391 1340 398H1370", "M1217 396H1257L1280 391",
  "M1290 481L1305 480 1343 467 1370 455 1399 443 1427 429", "M1352 409L1358 405 1370 403",
  "M1415 378L1412 382 1410 400 1404 414", "M1415 411L1427 414 1434 416 1453 429",
  "M1497 447L1491 445 1470 437 1466 432V422L1471 412 1475 397 1486 382 1495 376H1528L1551 382 1563 386 1577 395 1583 404V425L1577 432 1555 436H1493",
  "M1499 474L1533 476 1549 479H1572", "M1555 471L1549 473 1531 502 1514 514", "M1551 493L1560 503 1570 514 1585 522",
  "M1597 483L1592 485 1585 496V501L1592 502", "M1627 461L1629 465 1626 470 1624 495 1620 529 1610 508", "M1629 488L1634 489 1657 501",
  "M1568 543V553L1565 570 1564 633 1567 639 1573 641 1580 640 1583 635 1590 606 1602 617 1624 627 1652 636 1686 652",
  "M1563 574H1575L1608 569 1624 565", "M1623 577L1634 580 1648 587 1632 592 1608 594 1537 606 1525 607",
  "M1374 544L1379 541 1392 533 1404 534V543L1393 552 1359 578 1340 595V602L1372 582V577M1394 528L1392 533", "M1343 567L1357 576H1363",
  "M1342 603L1383 605 1406 607 1408 613 1406 619 1393 637 1381 648 1353 665 1349 667", "M1354 638H1359L1378 649",
  "M266 736L282 739 312 748 351 754 387 755", "M465 782L476 784 487 789", "M451 819L473 825 498 834", "M351 824L384 825 408 829",
  "M369 766L365 773 354 781", "M370 779V827", "M364 781L360 790 353 806 362 809 367 803 363 796 355 801M366 806L376 797 375 808 360 800",
];

function Annotations() {
  return (
    <svg className="absolute left-0 top-0 w-full h-full pointer-events-none" fill="none" stroke="#e01f26" strokeWidth="3" strokeLinecap="round" strokeLinejoin="round">
      {STROKES.map((d) => <path key={d} d={d} />)}
      <rect x="394" y="646" width="68" height="163" strokeWidth="5" strokeLinejoin="miter" />
      <circle cx="1531" cy="733" r="9" stroke="#f56c6f" strokeWidth="4" />
      <path d="M1525 733h2M1535 733h2M1531 726v2M1531 738v2" stroke="#222" strokeWidth="1" />
    </svg>
  );
}

/* ---------- bottom bars ---------- */

function StatusBar() {
  const [zoom, setZoom] = useState(50);
  return (
    <div className="h-[27px] shrink-0 bg-[#f0f0f0] border-t border-[#dcdcdc] flex items-center text-xs text-[#222] *:h-full">
      <div className="w-[178px] border-r border-[#d7d7d7] flex items-center pl-1 gap-[7px]">
        <Ico className="size-[11px]" box="0 0 11 11"><path d="M5.500 0v11M0 5.500h11M4 2l1.500-2L7 2M4 9l1.500 2L7 9M2 4L0 5.500 2 7M9 4l2 1.500L9 7" stroke="#24425f" /></Ico>1526, 570像素
      </div>
      <div className="w-[178px] border-r border-[#d7d7d7] flex items-center pl-1">
        <Ico className="size-[14px]" box="0 0 14 14"><path d="M5 2h8v7H5z" stroke="#24425f" strokeDasharray="2 1" /><path d="M2 1v9M1 3l1-2 1 2M4 12h9M11 11l2 1-2 1" stroke="#24425f" /></Ico>
      </div>
      <div className="w-[178px] border-r border-[#d7d7d7] flex items-center pl-[5px] gap-[6px]">
        <Ico className="size-[14px]" box="0 0 14 14"><path d="M5 1h8v8H5z" stroke="#24425f" /><path d="M2 1v9M1 3l1-2 1 2M4 12h9M11 11l2 1-2 1" stroke="#24425f" /></Ico>1920 × 1080像素
      </div>
      <div className="w-[178px] border-r border-[#d7d7d7]" />
      <div className="ml-auto w-[199px] border-l border-[#d7d7d7] flex items-center pl-[18px] pr-1 gap-[7px]">
        <span>100%</span>
        <button aria-label="缩小" className="size-4 rounded-full border border-gray-500 flex items-center justify-center bg-white"><Minus className="size-[10px]" strokeWidth={3} /></button>
        <input type="range" aria-label="缩放" value={zoom} onChange={(e) => setZoom(Number(e.target.value))} className="flex-1 min-w-0 h-1 appearance-none bg-[#d6d6d6] [&::-webkit-slider-thumb]:appearance-none [&::-webkit-slider-thumb]:w-[10px] [&::-webkit-slider-thumb]:h-[18px] [&::-webkit-slider-thumb]:rounded-b-md [&::-webkit-slider-thumb]:bg-[#0078d7]" />
        <button aria-label="放大" className="size-4 rounded-full border border-gray-500 flex items-center justify-center bg-white"><Plus className="size-[10px]" strokeWidth={3} /></button>
      </div>
    </div>
  );
}

function Task({ icon, text, active, className }: { icon: ReactNode; text: string; active?: boolean; className: string }) {
  return <button className={`h-full flex items-center gap-1 border-b-2 border-[#8ba0b6] text-left whitespace-nowrap ${active ? "bg-[#343434]" : ""} ${className}`}>{icon}<span>{text}</span></button>;
}

function Taskbar() {
  return (
    <footer className="h-10 shrink-0 bg-[#101010] flex items-center text-xs text-[#eee]">
      <button aria-label="开始" className="w-12 flex justify-center"><Ico className="size-4" box="0 0 16 16"><path d="M0 2l7-1v6.500H0zM8 1l8-1v7.500H8zM0 8.500h7V15l-7-1zM8 8.500h8V16l-8-1z" fill="#fff" /></Ico></button>
      <button aria-label="搜索" className="w-12 flex justify-center"><Search className="size-[17px] -scale-x-100" strokeWidth={2} /></button>
      <button aria-label="Chrome" className="w-[53px] flex justify-center">
        <Ico className="size-[23px]"><circle cx="12" cy="12" r="11" fill="#dd4b3e" /><path d="M2.500 6.500L8 16l5 7Q1 23 1 12q0-3 1.500-5.500z" fill="#1da362" /><path d="M12 7h10q3 8-3 13-3 3-7 3l5-8z" fill="#ffcd42" /><circle cx="12" cy="12" r="5.300" fill="#fff" /><circle cx="12" cy="12" r="4.200" fill="#4688f1" /></Ico>
      </button>
      <button aria-label="K" className="w-[46px] flex justify-center">
        <span className="size-6 rounded-[5px] bg-[#1e7fe8] flex items-center justify-center"><span className="size-[18px] rounded-full border-2 border-white text-[11px] leading-[14px] font-bold text-center text-white">K</span></span>
      </button>
      <Task className="ml-[6px] w-[152px] pl-[6px]" text="Easy Meeting Cla..." icon={<Ico><path d="M0 0h24v24H0z" fill="#5cb531" /><path d="M5 3h13v15M5 3v3h9M5 9v12h13M9 9v8M13 8v9h3" stroke="#fff" strokeWidth="2" /></Ico>} />
      <Task className="ml-[9px] w-[152px] pl-[7px]" text="ocam" icon={<Ico className="size-[22px]"><path d="M0 1h20l4 4v18H0z" fill="#f4f4f4" /><circle cx="9" cy="14" r="3.500" stroke="#e0562b" strokeWidth="3" /><path d="M17 8v10" stroke="#e0562b" strokeWidth="3" /><path d="M17 5h3" stroke="#999" strokeWidth="2" /></Ico>} />
      <Task active className="ml-[5px] w-[160px] pl-[10px]" text="无标题 - 画图" icon={<Palette />} />
      <Task className="ml-[5px] w-[152px] pl-[6px]" text="NX 8.5 - 加工 - [_..." icon={<NxLogo />} />
      <div className="ml-auto mr-[35px] h-full pb-[6px] flex items-center gap-2 text-white">
        <Ico className="size-[31px] mt-[6px]"><circle cx="12" cy="12" r="10" fill="#fff" /><circle cx="12" cy="12" r="11" stroke="#ccc" strokeDasharray="1 1" /><path d="M12 7l5 5-5 5-5-5z" fill="#101010" /><path d="M12 9.500l2.500 2.500-2.500 2.500L9.500 12z" fill="#fff" /></Ico>
        <span className="font-['Noto_Sans_CJK_SC',sans-serif] font-black text-[32px] leading-8">科迅教育</span>
      </div>
    </footer>
  );
}

function ImeBar() {
  return (
    <div className="absolute left-[1728px] right-0 top-[941px] h-6 bg-[#f7fbff] border-y border-[#9fb8d0] flex items-center gap-[6px] pl-[19px] text-[#1e6fc0]">
      <span className="absolute -left-[13px] -top-[3px] size-[27px] rounded-[5px] -rotate-6 bg-[#f0531c] text-white font-bold text-[26px] leading-[27px] text-center font-['Liberation_Sans',sans-serif]">S</span>
      <b className="w-4 text-[15px] text-center leading-5">中</b>
      <Ico className="size-4" box="0 0 16 16"><circle cx="4.500" cy="5" r="2" stroke="#1e6fc0" strokeWidth="1.500" /><path d="M10 7h4v3q0 3-3 4l1-3h-2z" fill="#1e6fc0" /></Ico>
      <Smile className="size-4 shrink-0" strokeWidth={2.5} /><Mic className="size-4 shrink-0" fill="currentColor" /><Keyboard className="size-4 shrink-0" strokeWidth={2.5} />
      <Ico className="size-4" box="0 0 16 16"><circle cx="6" cy="4" r="3" fill="#b9c3d3" /><path d="M0 15q0-7 6-7 3 0 5 2v5z" fill="#b9c3d3" /><path d="M8 9.500h7v5H8z" fill="#fff" stroke="#b9c3d3" /></Ico>
      <Shirt className="size-4 shrink-0" fill="currentColor" /><Wrench className="size-4 shrink-0" fill="currentColor" />
    </div>
  );
}

function Recorder() {
  return (
    <div className="absolute left-[1667px] top-[1000px] w-[243px] h-[25px] bg-[#ece9e2] border-2 border-[#8a8a84] flex items-center text-xs text-black whitespace-nowrap">
      <button className="flex items-center gap-1 ml-[6px]"><i className="size-[13px] rounded-full bg-[radial-gradient(circle_at_40%_30%,#f08a80,#b3140f_60%)]" />停止</button>
      <button className="flex items-center gap-1 ml-3"><span className="size-4 bg-[#c5221b] rounded-[2px] flex items-center justify-center gap-[3px]"><i className="w-[3px] h-3 bg-white" /><i className="w-[3px] h-3 bg-white" /></span>Pause</button>
      <button className="flex items-center gap-1 ml-[11px]">
        <Ico className="size-[15px]" box="0 0 16 16"><path d="M1 1h14v10H1z" fill="#2262c9" stroke="#b9c4d2" /><path d="M2 2h7l-7 7z" fill="#69a4ee" /><path d="M5 12h6l2 3H3z" fill="#ddd" stroke="#999" /></Ico>屏幕捕获
      </button>
      <b className="ml-auto mr-[2px] text-[#f01010] text-[11px]">0:23:55</b>
    </div>
  );
}

export default function App() {
  return (
    <div className={`relative w-full h-screen overflow-hidden flex flex-col bg-white ${UI}`}>
      <TitleBar />
      <Tabs />
      <Ribbon />
      <main className="flex-1 min-h-0 flex">
        <div className={`flex-1 min-w-0 bg-[#c9d5e4] pl-[5px] pt-[6px] flex flex-col text-xs text-black overflow-hidden ${NX}`}>
          <NxHeader />
          <div className="flex-1 min-h-0 flex border-t border-gray-500">
            <LeftRail />
            <Viewport />
            <Navigator />
            <ResourceBar />
          </div>
        </div>
        <div className="w-[17px] shrink-0 bg-[#f0f0f0] flex flex-col items-center">
          <ChevronUp className="size-[17px] shrink-0 my-px text-gray-600" strokeWidth={2.5} />
          <div className="w-[15px] h-[618px] bg-[#cdcdcd]" />
          <ChevronDown className="size-4 mt-auto text-gray-600" strokeWidth={2.5} />
        </div>
      </main>
      <div className="h-4 shrink-0 bg-[#f0f0f0] flex items-center pr-[60px]">
        <ChevronLeft className="w-[17px] h-4 text-gray-700" strokeWidth={3} />
        <div className="flex-1 h-[15px] bg-[#cdcdcd]" />
      </div>
      <StatusBar />
      <Taskbar />
      <Dialog />
      <Annotations />
      <div className="absolute right-0 top-[496px] w-4 h-[50px] bg-[#7d7d7d] overflow-hidden"><i className="absolute left-3 top-[17px] size-4 rounded-full bg-white" /></div>
      <ImeBar />
      <Recorder />
    </div>
  );
}
